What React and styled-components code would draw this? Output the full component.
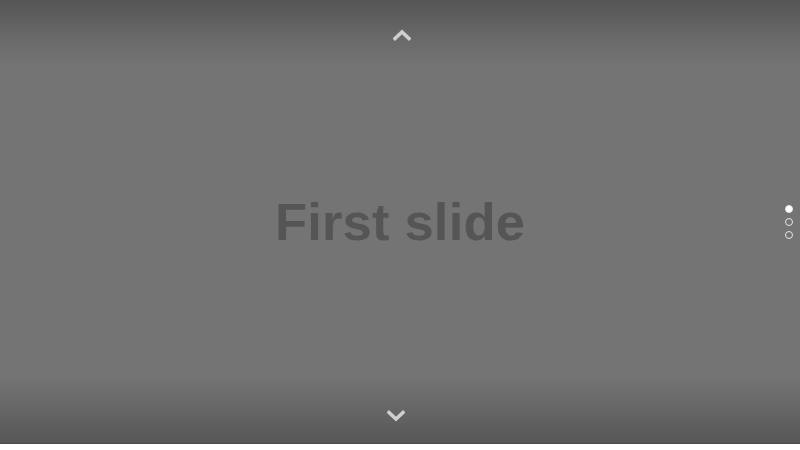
import styled, { createGlobalStyle } from "styled-components";

const Global = createGlobalStyle`
  html, body { margin: 0; padding: 0; background: #fff; }
  body { font-family: "Liberation Sans", Arial, sans-serif; }
`;

const Slider = styled.section`
  position: relative;
  width: 800px;
  height: 443px;
  background: linear-gradient(
    to bottom,
    #555555 0px,
    #6a6a6a 40px,
    #747474 66px,
    #747474 376px,
    #6a6a6a 400px,
    #575757 442px
  );
  border-bottom: 1px solid #4a4a4a;
  display: flex;
  align-items: center;
  justify-content: center;
  overflow: hidden;
`;

const Title = styled.h1`
  margin: 0;
  font-size: 52.5px;
  font-weight: 700;
  color: #555555;
  letter-spacing: 0.2px;
`;

const Arrow = styled.button`
  position: absolute;
  left: ${(p) => p.$x}px;
  ${(p) => (p.$down ? "bottom: 19px;" : "top: 27px;")}
  width: 20px;
  height: 16px;
  padding: 0;
  border: 0;
  background: none;
  cursor: pointer;
  display: flex;
  align-items: center;
  justify-content: center;
  svg { display: block; }
`;

const Dots = styled.ul`
  position: absolute;
  right: 7px;
  top: 205px;
  margin: 0;
  padding: 0;
  list-style: none;
  display: flex;
  flex-direction: column;
  gap: 5px;
`;

const Dot = styled.li`
  width: 8px;
  height: 8px;
  box-sizing: border-box;
  border-radius: 50%;
  border: 1px solid #e6e6e6;
  background: ${(p) => (p.$active ? "#ffffff" : "transparent")};
`;

const Chevron = ({ down }) => (
  <svg width="18" height="12" viewBox="0 0 18 12">
    <path
      d={down ? "M2 2.5 L9 9 L16 2.5" : "M2 9.5 L9 3 L16 9.5"}
      fill="none"
      stroke="#cfcfcf"
      strokeWidth="3.6"
      strokeLinecap="square"
    />
  </svg>
);

export default function App() {
  return (
    <>
      <Global />
      <Slider>
        <Arrow $x={392} aria-label="Previous slide">
          <Chevron />
        </Arrow>
        <Title>First slide</Title>
        <Arrow $x={386} $down aria-label="Next slide">
          <Chevron down />
        </Arrow>
        <Dots>
          <Dot $active />
          <Dot />
          <Dot />
        </Dots>
      </Slider>
    </>
  );
}
